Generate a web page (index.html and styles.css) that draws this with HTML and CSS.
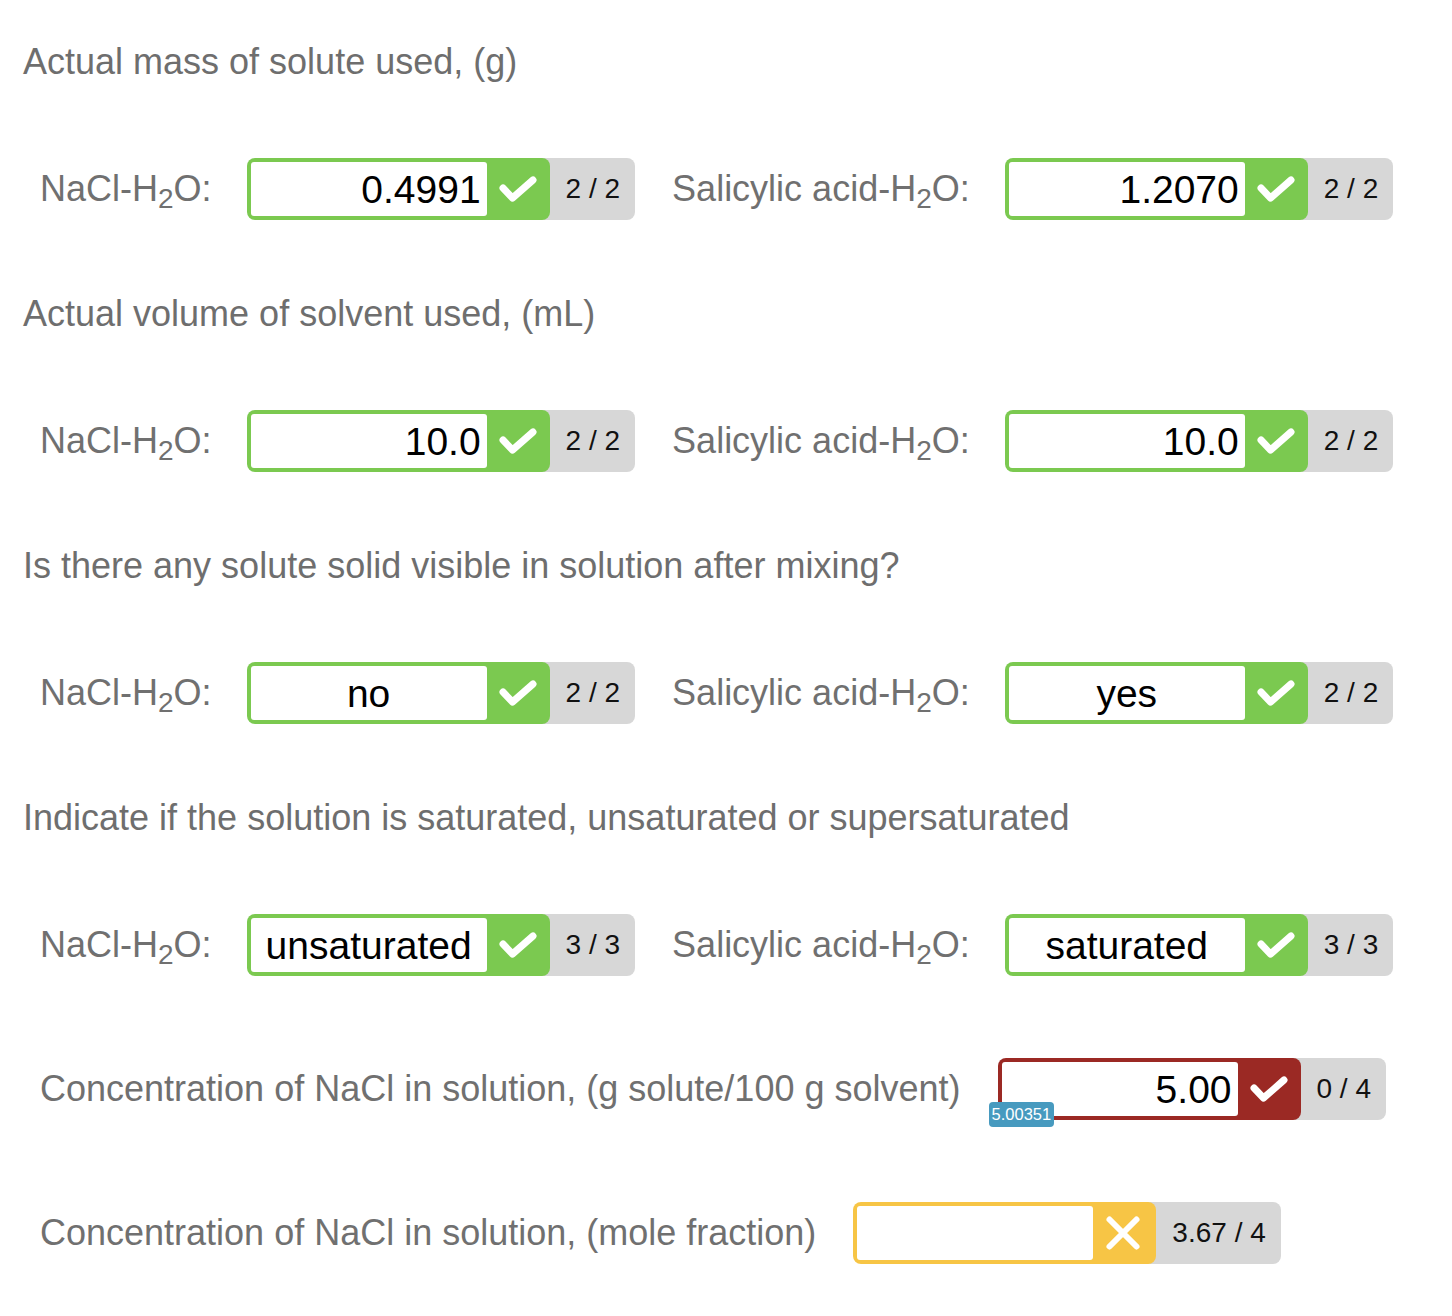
FILE: index.html
```html
<!DOCTYPE html>
<html lang="en">
<head>
  <meta charset="UTF-8" />
  <meta name="viewport" content="width=device-width, initial-scale=1.0" />
  <title>Solubility results</title>
  <link rel="stylesheet" href="styles.css">
</head>
<body>
  <main class="page">

    <section class="part">
      <h3 class="prompt">Actual mass of solute used, (g)</h3>
      <div class="pair">
        <div class="entry">
          <span class="label">NaCl-H<sub>2</sub>O:</span>
          <div class="answer">
            <div class="field ok"><span class="value">0.4991</span><span class="mark"><svg width="44" height="32" viewBox="0 0 44 32"><path d="M9 15 L18.5 25 L39 7" /></svg></span></div>
            <span class="score">2 / 2</span>
          </div>
        </div>
        <div class="entry">
          <span class="label">Salicylic acid-H<sub>2</sub>O:</span>
          <div class="answer">
            <div class="field ok"><span class="value">1.2070</span><span class="mark"><svg width="44" height="32" viewBox="0 0 44 32"><path d="M9 15 L18.5 25 L39 7" /></svg></span></div>
            <span class="score">2 / 2</span>
          </div>
        </div>
      </div>
    </section>

    <section class="part">
      <h3 class="prompt">Actual volume of solvent used, (mL)</h3>
      <div class="pair">
        <div class="entry">
          <span class="label">NaCl-H<sub>2</sub>O:</span>
          <div class="answer">
            <div class="field ok"><span class="value">10.0</span><span class="mark"><svg width="44" height="32" viewBox="0 0 44 32"><path d="M9 15 L18.5 25 L39 7" /></svg></span></div>
            <span class="score">2 / 2</span>
          </div>
        </div>
        <div class="entry">
          <span class="label">Salicylic acid-H<sub>2</sub>O:</span>
          <div class="answer">
            <div class="field ok"><span class="value">10.0</span><span class="mark"><svg width="44" height="32" viewBox="0 0 44 32"><path d="M9 15 L18.5 25 L39 7" /></svg></span></div>
            <span class="score">2 / 2</span>
          </div>
        </div>
      </div>
    </section>

    <section class="part">
      <h3 class="prompt">Is there any solute solid visible in solution after mixing?</h3>
      <div class="pair">
        <div class="entry">
          <span class="label">NaCl-H<sub>2</sub>O:</span>
          <div class="answer">
            <div class="field ok"><span class="value word">no</span><span class="mark"><svg width="44" height="32" viewBox="0 0 44 32"><path d="M9 15 L18.5 25 L39 7" /></svg></span></div>
            <span class="score">2 / 2</span>
          </div>
        </div>
        <div class="entry">
          <span class="label">Salicylic acid-H<sub>2</sub>O:</span>
          <div class="answer">
            <div class="field ok"><span class="value word">yes</span><span class="mark"><svg width="44" height="32" viewBox="0 0 44 32"><path d="M9 15 L18.5 25 L39 7" /></svg></span></div>
            <span class="score">2 / 2</span>
          </div>
        </div>
      </div>
    </section>

    <section class="part">
      <h3 class="prompt">Indicate if the solution is saturated, unsaturated or supersaturated</h3>
      <div class="pair">
        <div class="entry">
          <span class="label">NaCl-H<sub>2</sub>O:</span>
          <div class="answer">
            <div class="field ok"><span class="value word">unsaturated</span><span class="mark"><svg width="44" height="32" viewBox="0 0 44 32"><path d="M9 15 L18.5 25 L39 7" /></svg></span></div>
            <span class="score">3 / 3</span>
          </div>
        </div>
        <div class="entry">
          <span class="label">Salicylic acid-H<sub>2</sub>O:</span>
          <div class="answer">
            <div class="field ok"><span class="value word">saturated</span><span class="mark"><svg width="44" height="32" viewBox="0 0 44 32"><path d="M9 15 L18.5 25 L39 7" /></svg></span></div>
            <span class="score">3 / 3</span>
          </div>
        </div>
      </div>
    </section>

    <div class="solos">
      <div class="entry solo">
        <span class="label">Concentration of NaCl in solution, (g solute/100 g solvent)</span>
        <div class="answer">
          <div class="field bad">
            <span class="value">5.00</span><span class="mark"><svg width="44" height="32" viewBox="0 0 44 32"><path d="M9 15 L18.5 25 L39 7" /></svg></span>
            <span class="hint">5.00351</span>
          </div>
          <span class="score">0 / 4</span>
        </div>
      </div>
      <div class="entry solo">
        <span class="label">Concentration of NaCl in solution, (mole fraction)</span>
        <div class="answer">
          <div class="field part-ok"><span class="value"></span><span class="mark"><svg width="40" height="40" viewBox="0 0 40 40"><path d="M6.5 6.5 L33.5 33.5 M33.5 6.5 L6.5 33.5" /></svg></span></div>
          <span class="score">3.67 / 4</span>
        </div>
      </div>
    </div>

  </main>
</body>
</html>
```

FILE: styles.css
```css
body {
  margin: 0;
  background: #fff;
  font-family: "Liberation Sans", Arial, sans-serif;
  color: #707070;
}
.page {
  padding: 35px 0 40px 23px;
}
.prompt {
  margin: 0 0 69px;
  font-size: 36px;
  font-weight: normal;
  line-height: 54px;
  color: #6e6e6e;
}
.pair {
  display: flex;
  gap: 37px;
  padding-left: 17px;
  margin-bottom: 67px;
}
.entry {
  display: flex;
  align-items: center;
  gap: 35px;
}
.label {
  font-size: 36px;
  line-height: 1;
  color: #707070;
  white-space: nowrap;
}
.label sub {
  font-size: 28px;
  line-height: 0;
  vertical-align: -7px;
}
.answer {
  display: flex;
  height: 62px;
}
.field {
  position: relative;
  z-index: 1;
  display: flex;
  width: 303px;
  height: 62px;
  padding: 4px;
  box-sizing: border-box;
  border-radius: 8px;
}
.field.ok { background: #7bc950; }
.field.bad { background: #9b2924; }
.field.part-ok { background: #f7c545; }
.value {
  width: 236px;
  height: 54px;
  padding-right: 6px;
  box-sizing: border-box;
  background: #fff;
  border-radius: 3px;
  font-size: 39px;
  line-height: 56px;
  text-align: right;
  color: #000;
}
.value.word {
  padding: 0;
  text-align: center;
}
.mark {
  flex: 1;
  display: flex;
  align-items: center;
  justify-content: center;
}
.mark svg path {
  fill: none;
  stroke: #fff;
  stroke-width: 7;
  stroke-linecap: round;
  stroke-linejoin: round;
}
.part-ok .mark svg path {
  stroke-width: 6;
}
.score {
  margin-left: -8px;
  padding: 0 15px 0 24px;
  background: #d7d7d7;
  border-radius: 0 8px 8px 0;
  font-size: 28px;
  line-height: 62px;
  color: #111;
  white-space: nowrap;
}
.hint {
  position: absolute;
  left: -9px;
  top: 44px;
  z-index: 2;
  padding: 0 3px;
  height: 25px;
  line-height: 25px;
  background: #479abf;
  border-radius: 4px;
  font-size: 16.5px;
  color: #fff;
}
.solos {
  display: flex;
  flex-direction: column;
  gap: 82px;
  margin-top: 82px;
  padding-left: 17px;
}
.solo {
  gap: 37px;
}
```
